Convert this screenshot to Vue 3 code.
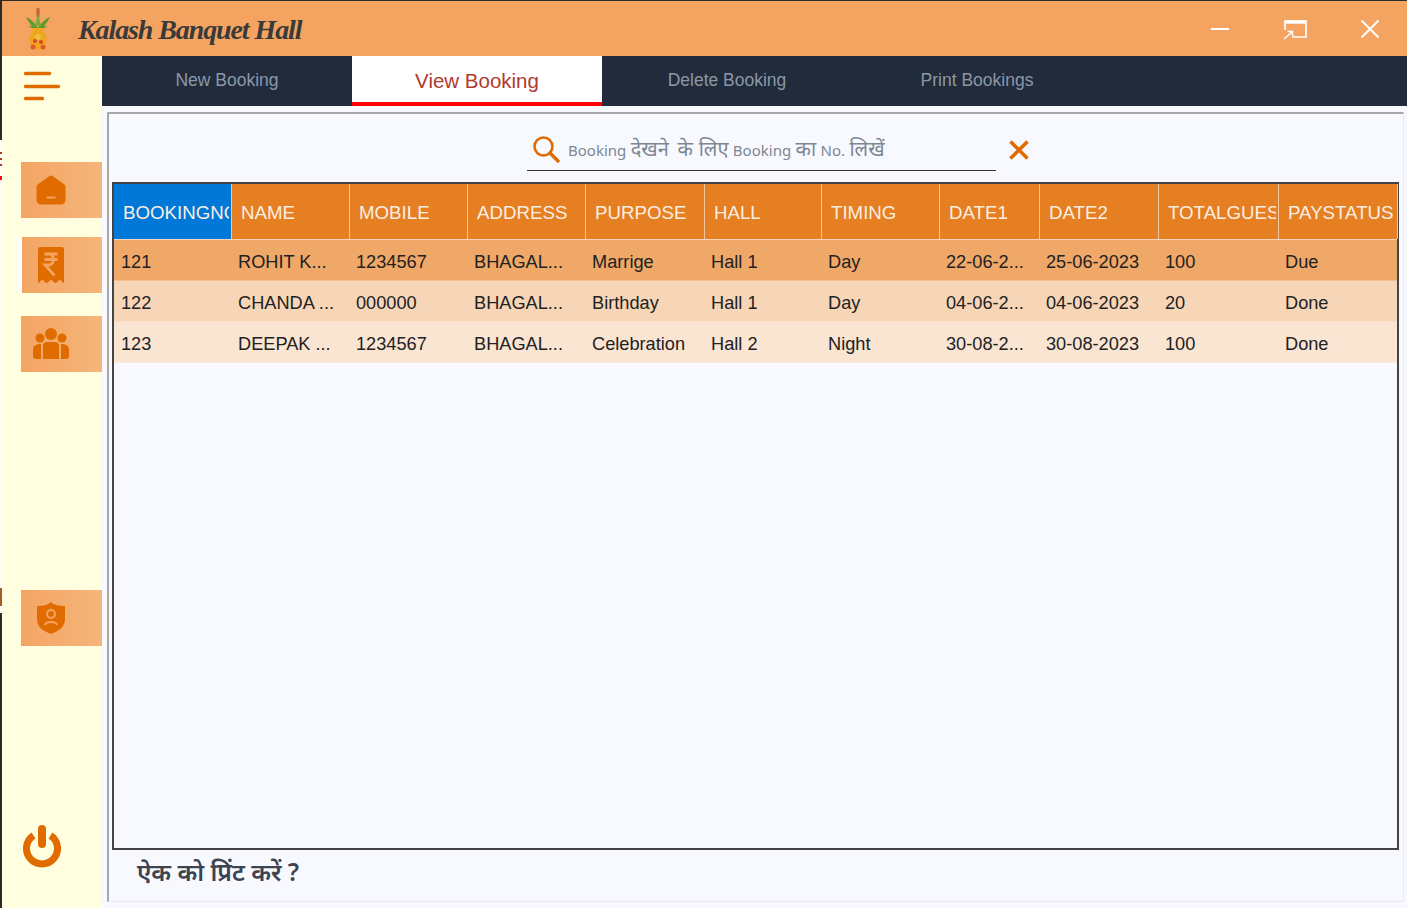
<script setup>
const tabs = [
  { label: 'New Booking' },
  { label: 'View Booking', active: true },
  { label: 'Delete Booking' },
  { label: 'Print Bookings' },
]

const columns = [
  { name: 'BOOKINGNO', width: 118 },
  { name: 'NAME', width: 118 },
  { name: 'MOBILE', width: 118 },
  { name: 'ADDRESS', width: 118 },
  { name: 'PURPOSE', width: 119 },
  { name: 'HALL', width: 117 },
  { name: 'TIMING', width: 118 },
  { name: 'DATE1', width: 100 },
  { name: 'DATE2', width: 119 },
  { name: 'TOTALGUESTS', width: 120 },
  { name: 'PAYSTATUS', width: 119 },
]

const rows = [
  ['121', 'ROHIT K...', '1234567', 'BHAGAL...', 'Marrige', 'Hall 1', 'Day', '22-06-2...', '25-06-2023', '100', 'Due'],
  ['122', 'CHANDA ...', '000000', 'BHAGAL...', 'Birthday', 'Hall 1', 'Day', '04-06-2...', '04-06-2023', '20', 'Done'],
  ['123', 'DEEPAK ...', '1234567', 'BHAGAL...', 'Celebration', 'Hall 2', 'Night', '30-08-2...', '30-08-2023', '100', 'Done'],
]
</script>

<template>
  <div class="window">
    <header class="titlebar">
      <svg class="kalash" viewBox="0 0 24 42" width="24" height="42">
        <path d="M12 0v9" stroke="#b9683f" stroke-width="3" />
        <circle cx="12" cy="4" r="1.500" fill="#e2562c" />
        <path d="M12 20C9 15 5 11 0 9c2 4 4 7 6 9-2 0-3 0-4-1 2 3 6 4 10 3 4 1 8 0 10-3-1 1-2 1-4 1 2-2 4-5 6-9-5 2-9 6-12 11z" fill="#5f9a2e" />
        <path d="M12 5l-3 13h6z" fill="#7aa83a" />
        <path d="M7 20h10l1 4c3 3 3 7 2 10-1 4-4 7-8 8-4-1-7-4-8-8-1-3-1-7 2-10z" fill="#efa51d" />
        <circle cx="12" cy="29" r="3" fill="#e8c33a" />
        <circle cx="9" cy="33" r="2" fill="#d8432a" />
        <circle cx="15" cy="34" r="2" fill="#d8432a" />
        <circle cx="7" cy="39" r="2.500" fill="#e2562c" />
        <circle cx="17" cy="39" r="2.500" fill="#e2562c" />
      </svg>
      <span class="brand">Kalash Banquet Hall</span>
      <div class="win-actions">
        <svg viewBox="0 0 24 24" width="24" height="24" fill="none" stroke="#fff" stroke-width="2">
          <path d="M3 12h18" />
        </svg>
        <svg viewBox="0 0 26 24" width="26" height="24" fill="none" stroke="#fff" stroke-width="1.700">
          <path d="M3 13V4h21v16H10" />
          <path d="M3 5h21" stroke-width="3.400" />
          <path d="M2 22l8-7M5.500 14.500H10.500V19" stroke-width="1.500" />
        </svg>
        <svg viewBox="0 0 24 24" width="24" height="24" fill="none" stroke="#fff" stroke-width="2">
          <path d="M3.500 3.500l17 17M20.500 3.500l-17 17" />
        </svg>
      </div>
    </header>

    <div class="body">
      <aside class="sidebar">
        <svg class="menu" viewBox="0 0 40 30" width="40" height="30" fill="none" stroke="#e06c00" stroke-width="3.400" stroke-linecap="round">
          <path d="M4.500 2.500h24M4.500 15.500h33M4.500 27.500h17" />
        </svg>

        <button class="side-btn first">
          <svg viewBox="0 0 32 32" width="32" height="32">
            <path d="M14.500 2a2.500 2.500 0 0 1 3 0L29.500 10.500a2.500 2.500 0 0 1 1 2V26a4.500 4.500 0 0 1-4.500 4.500H6A4.500 4.500 0 0 1 1.500 26V12.500a2.500 2.500 0 0 1 1-2z" fill="#e06c00" />
            <path d="M11.500 23.500h9" stroke="#f4a460" stroke-width="2" />
          </svg>
        </button>
        <button class="side-btn second">
          <svg viewBox="0 0 26 36" width="26" height="36">
            <path d="M2 0h22a2 2 0 0 1 2 2v34c-2 0-2-3-4.300-3s-2 3-4.300 3-2-3-4.400-3-2 3-4.400 3-2-3-4.300-3S2 36 0 36V2a2 2 0 0 1 2-2z" fill="#e06c00" />
            <path d="M6.500 7h13M6.500 12.500h13M10.500 7c6.500 0 6.500 11 0 11h-3.500l9.500 10.500" fill="none" stroke="#f4a460" stroke-width="2.800" />
          </svg>
        </button>
        <button class="side-btn third">
          <svg viewBox="0 0 36 32" width="36" height="32" fill="#e06c00">
            <circle cx="18" cy="6" r="6" />
            <circle cx="7" cy="10" r="4.500" />
            <circle cx="29" cy="10" r="4.500" />
            <path d="M10 18a4 4 0 0 1 4-4h8a4 4 0 0 1 4 4v13H10z" />
            <path d="M8 16v15H3a3 3 0 0 1-3-3v-7c0-3 3-5 8-5zM28 16v15h5a3 3 0 0 0 3-3v-7c0-3-3-5-8-5z" />
          </svg>
        </button>
        <button class="side-btn fourth">
          <svg viewBox="0 0 28 32" width="28" height="32">
            <path d="M14 0c3 3 8 4 14 4v13c0 8-6 12-14 15C6 29 0 25 0 17V4c6 0 11-1 14-4z" fill="#e06c00" />
            <circle cx="14" cy="12" r="4" fill="none" stroke="#f4a460" stroke-width="2" />
            <path d="M8 23c1-4 11-4 12 0" fill="none" stroke="#f4a460" stroke-width="2" />
          </svg>
        </button>

        <svg class="power" viewBox="0 0 38 44" width="38" height="44" fill="none" stroke="#e06c00" stroke-linecap="round">
          <path d="M10.500 10.500a15.500 15.500 0 1 0 17 0" stroke-width="7" stroke-linecap="butt" />
          <path d="M19 4v15" stroke-width="8" />
        </svg>
      </aside>

      <main class="main">
        <nav class="tabs">
          <div
            v-for="tab in tabs"
            :key="tab.label"
            class="tab"
            :class="{ active: tab.active }"
          >
            {{ tab.label }}
          </div>
        </nav>

        <section class="panel">
          <div class="search-row">
            <div class="search">
              <svg viewBox="0 0 28 28" width="28" height="28" fill="none" stroke="#e06c00" stroke-width="2.600">
                <circle cx="11.500" cy="11.500" r="9" />
                <path d="M18 18l8 8" stroke-width="3.400" stroke-linecap="round" />
              </svg>
              <span class="hint">Booking <span class="hi">देखने</span>&nbsp; <span class="hi">के लिए</span> Booking <span class="hi">का</span> No. <span class="hi">लिखें</span></span>
            </div>
            <svg class="clear" viewBox="0 0 22 22" width="22" height="22" fill="none" stroke="#e06c00" stroke-width="3.600">
              <path d="M2.500 2.500l17 17M19.500 2.500l-17 17" />
            </svg>
          </div>

          <div class="grid">
            <div class="grid-head">
              <div
                v-for="(col, i) in columns"
                :key="col.name"
                class="head-cell"
                :class="{ selected: i === 0 }"
                :style="{ width: col.width + 'px' }"
              >
                <span>{{ col.name }}</span>
              </div>
            </div>
            <div v-for="(row, r) in rows" :key="row[0]" class="grid-row" :class="'row-' + r">
              <div
                v-for="(cell, c) in row"
                :key="c"
                class="cell"
                :style="{ width: columns[c].width + 'px' }"
              >
                {{ cell }}
              </div>
            </div>
          </div>

          <p class="print-label">ऐक को प्रिंट करें ?</p>
        </section>
      </main>
    </div>
  </div>
</template>

<style scoped>
.window {
  width: 1405px;
  height: 907px;
  margin: 1px 0 0 2px;
  display: flex;
  flex-direction: column;
  font-family: "Liberation Sans", "Noto Sans", Arial, sans-serif;
  overflow: hidden;
}

.titlebar {
  height: 55px;
  flex: none;
  display: flex;
  align-items: center;
  background: #f4a460;
  padding-left: 24px;
}

.brand {
  margin: 3px 0 0 28px;
  font-family: "Liberation Serif", serif;
  font-style: italic;
  font-weight: 700;
  font-size: 28px;
  letter-spacing: -1.100px;
  color: #3a3a3a;
}

.win-actions {
  margin-left: auto;
  margin-right: 25px;
  display: flex;
  align-items: center;
  gap: 50px;
}

.body {
  flex: 1;
  display: flex;
  min-height: 0;
}

.sidebar {
  width: 100px;
  flex: none;
  display: flex;
  flex-direction: column;
  align-items: flex-end;
  background: #ffffe0;
}

.menu {
  align-self: flex-start;
  margin: 15px 0 0 19px;
}

.side-btn {
  height: 56px;
  padding: 0 0 0 14px;
  border: 0;
  display: flex;
  align-items: center;
  background: linear-gradient(to right, #f4a564, #f5b57a);
}

.side-btn.first {
  width: 81px;
  margin-top: 61px;
}

.side-btn.second {
  width: 80px;
  margin-top: 19px;
  padding-left: 16px;
  box-shadow: -4px 0 0 #fff;
}

.side-btn.third {
  width: 81px;
  margin-top: 23px;
  padding-left: 12px;
}

.side-btn.fourth {
  width: 81px;
  margin-top: 218px;
  padding-left: 16px;
}

.power {
  align-self: flex-start;
  margin: 179px 0 0 21px;
}

.main {
  flex: 1;
  min-width: 0;
  display: flex;
  flex-direction: column;
  background: #f8f9ff;
}

.tabs {
  height: 50px;
  flex: none;
  display: flex;
  background: #212b3b;
}

.tab {
  width: 250px;
  box-sizing: border-box;
  padding-bottom: 1px;
  display: flex;
  align-items: center;
  justify-content: center;
  font-size: 17.500px;
  color: #8b97a8;
}

.tab.active {
  padding: 4px 0 0;
  background: #fff;
  border-bottom: 4px solid #ff0000;
  font-size: 20.500px;
  color: #b03a2e;
}

.panel {
  flex: 1;
  min-height: 0;
  margin: 6px 3px 6px 5px;
  padding: 0 4px 0 3px;
  border-top: 2px solid #a8a8a8;
  border-left: 2px solid #a8a8a8;
  border-bottom: 1px solid #e8e8ee;
  border-right: 1px solid #e8e8ee;
  display: flex;
  flex-direction: column;
}

.search-row {
  height: 68px;
  flex: none;
  padding-left: 415px;
  display: flex;
  align-items: flex-start;
}

.search {
  width: 469px;
  height: 57px;
  box-sizing: border-box;
  padding: 21px 0 0 5px;
  display: flex;
  align-items: flex-start;
  gap: 8px;
  border-bottom: 1px solid #333;
}

.hint {
  font-family: "Noto Sans", "Noto Sans CJK SC", sans-serif;
  font-size: 15px;
  word-spacing: 0.500px;
  color: #7d8794;
  white-space: nowrap;
}

.hi {
  font-size: 20px;
}

.clear {
  margin: 25px 0 0 12px;
}

.grid {
  flex: 1;
  min-height: 0;
  border: 2px solid #444;
}

.grid-head {
  display: flex;
  height: 56px;
  border-bottom: 1px solid #f3d6bd;
  box-sizing: border-box;
}

.head-cell {
  box-sizing: border-box;
  flex: none;
  display: flex;
  align-items: center;
  padding: 3px 2px 0 9px;
  overflow: hidden;
  background: #e67e22;
  border-right: 1px solid #f4c79f;
  font-size: 18.700px;
  color: #fbeee2;
  white-space: nowrap;
}

.head-cell span {
  overflow: hidden;
}

.head-cell.selected {
  background: #0078d7;
}

.grid-row {
  display: flex;
  height: 41px;
  border-bottom: 1px solid rgba(255, 255, 255, 0.25);
  box-sizing: border-box;
  font-size: 18.200px;
  color: #222;
}

.row-0 {
  background: #f0a868;
}

.row-1 {
  background: #f7d6b8;
}

.row-2 {
  background: #fae5d3;
}

.cell {
  box-sizing: border-box;
  flex: none;
  display: flex;
  align-items: center;
  padding: 5px 0 0 6px;
  white-space: nowrap;
  overflow: hidden;
}

.cell:first-child {
  padding-left: 7px;
}

.print-label {
  height: 51px;
  box-sizing: border-box;
  flex: none;
  margin: 0;
  padding: 0 0 9px 25px;
  display: flex;
  align-items: center;
  font-family: "Noto Sans", "Noto Sans CJK SC", sans-serif;
  font-size: 24.500px;
  font-weight: 600;
  color: #3b4450;
}
</style>

<style>
html,
body {
  margin: 0;
  height: 100%;
}

/* the window behind shows through along the left edge */
html {
  background: linear-gradient(
    to bottom,
    #2a2a2a 0 140px,
    #f8fcff 140px 152px,
    #a83a2a 152px 154px,
    #f8fcff 154px 158px,
    #a83a2a 158px 160px,
    #f8fcff 160px 164px,
    #a83a2a 164px 166px,
    #f8fcff 166px 176px,
    #ff0000 176px 180px,
    #f8fcff 180px 588px,
    #a85a2a 588px 606px,
    #f8fcff 606px 613px,
    #2a2a2a 613px
  );
}
</style>
